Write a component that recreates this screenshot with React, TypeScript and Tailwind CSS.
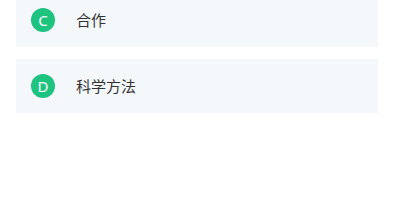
const options = [
  { key: 'C', label: '合作' },
  { key: 'D', label: '科学方法' },
];

export default function App() {
  return (
    <div
      className="w-[393px] h-[221px] overflow-hidden bg-white"
      style={{ fontFamily: '"Noto Sans", "Noto Sans CJK SC", sans-serif' }}
    >
      <div className="-mt-[7px] flex flex-col gap-3 pl-4 pr-[15px]">
        {options.map((o) => (
          <div key={o.key} className="flex h-[54px] items-center bg-[#f5f8fb] pl-[15px]">
            <div className="flex h-6 w-6 items-center justify-center rounded-full bg-[#1dc37f] text-[15px] leading-none text-white">
              {o.key}
            </div>
            <span className="ml-[21px] text-[15px] text-[#333333]">{o.label}</span>
          </div>
        ))}
      </div>
    </div>
  );
}
